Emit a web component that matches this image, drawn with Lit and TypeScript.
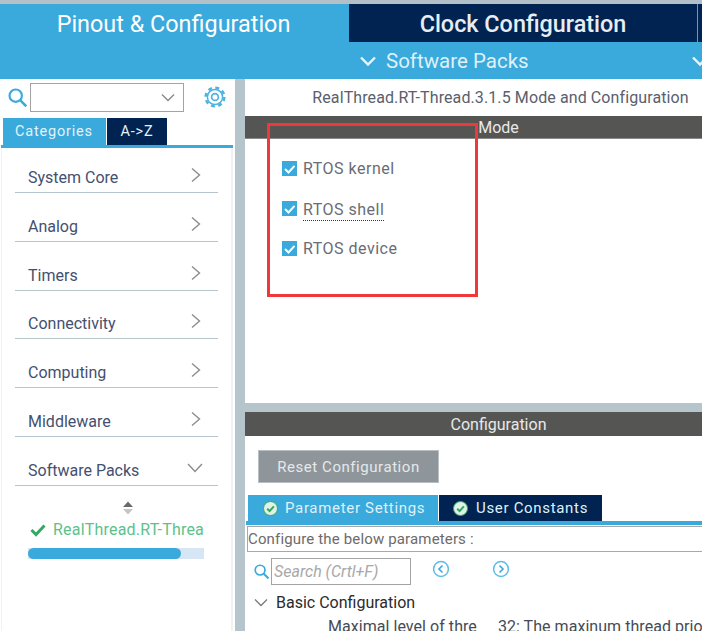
import { LitElement, html, css, svg } from "lit";
import { customElement } from "lit/decorators.js";

const chev = (d: string) => html`<svg class="chev" width="16" height="16" viewBox="0 0 16 16"><path d="${d}" fill="none" stroke="#8c8c8c" stroke-width="1.4"/></svg>`;
const RIGHT = "M5 1.5 L12.5 8 L5 14.5";
const DOWN = "M1 4 L8 11.5 L15 4";
const search = (s: number) => html`<svg width="${s}" height="${s}" viewBox="0 0 16 16"><circle cx="6.5" cy="6.5" r="5.2" fill="none" stroke="#3aa9dc" stroke-width="1.8"/><path d="M10.2 10.2 L15.4 15.4" stroke="#3aa9dc" stroke-width="2.2"/></svg>`;
const okBadge = html`<svg width="15" height="15" viewBox="0 0 15 15"><circle cx="7.5" cy="7.5" r="7" fill="#dff3e6" stroke="#35a864" stroke-width="1"/><path d="M4.2 7.7 L6.6 10 L10.9 5.4" fill="none" stroke="#35a864" stroke-width="2"/></svg>`;
const circ = (d: string) => html`<svg width="18" height="18" viewBox="0 0 18 18"><circle cx="9" cy="9" r="7.4" fill="none" stroke="#5cbde6" stroke-width="1.5"/><path d="${d}" fill="none" stroke="#3aa9dc" stroke-width="1.6"/></svg>`;
const check = svg`<path d="M3 8 L6.5 11.5 L12.5 4.8" fill="none" stroke="#fff" stroke-width="2"/>`;

@customElement("app-root")
export class AppRoot extends LitElement {
  static styles = css`
    :host { display: block; width: 702px; height: 631px; overflow: hidden; position: relative; background: #fff;
      font-family: Roboto, "Liberation Sans", sans-serif; color: #555; }
    .top { background: #3aa9dc; border-top: 4px solid #b3c0c8; height: 75px; display: flex; flex-direction: column; }
    .tabs { display: flex; height: 38px; }
    .tab { font-size: 23.4px; color: #fff; display: flex; justify-content: center; align-items: center; font-weight: 400; padding-top: 2px; box-sizing: border-box; }
    .t1 { width: 349px; padding-right: 2px; }
    .t2 { width: 348px; background: #002352; color: #e8edf2; font-weight: 500; }
    .t3 { flex: 1; margin-left: 1px; background: #002352; }
    .packs { height: 37px; position: relative; display: flex; align-items: center; color: #dff1fa; font-size: 20.5px; padding-left: 359px; gap: 9px; }
    .packs .end { margin-left: auto; margin-right: -7px; }
    .body { display: flex; height: 552px; }
    .side { width: 235px; flex: none; padding-left: 1px; box-sizing: border-box; }
    .sr { display: flex; align-items: center; height: 34px; padding-left: 7px; margin-top: 1px; }
    .combo { width: 154px; height: 29px; box-sizing: border-box; border: 1px solid #a3a3a3; margin-left: 3px; display: flex; align-items: center; justify-content: flex-end; padding-right: 8px; }
    .gear { margin-left: 20px; }
    .ctabs { display: flex; height: 27px; margin-top: 4px; padding-left: 2px; gap: 1px; }
    .ctab { display: flex; align-items: center; justify-content: center; font-size: 14.5px; letter-spacing: 0.8px; color: #e4f2fa; box-sizing: border-box; }
    .c1 { width: 103px; background: #3aa9dc; padding-right: 1px; }
    .c2 { width: 60px; background: #002352; }
    .cline { height: 3px; background: #3aa9dc; width: 232px; }
    .cats { border-left: 1px solid #f0f2f3; border-right: 2px solid #f0f2f3; padding-left: 13px; height: 483px; width: 232px; box-sizing: border-box; }
    .cat { height: 48.8px; width: 203px; box-sizing: border-box; border-bottom: 1px solid #b6c4cc; display: flex; align-items: flex-end; justify-content: space-between; padding: 0 15px 5px 13px; font-size: 16px; color: #445070; }
    .cat:first-child { height: 45px; }
    .cat .chev { margin-bottom: 4px; }
    .sorter { display: flex; justify-content: center; height: 14px; margin-top: 15px; width: 226px; }
    .pack { font-size: 16px; letter-spacing: 0.2px; color: #5cc28c; display: flex; align-items: center; gap: 7px; height: 28px; padding-left: 15px; white-space: nowrap; width: 189px; overflow: hidden; box-sizing: border-box; margin-top: 1px; }
    .bar { width: 176px; height: 11px; margin: 4px 0 0 13px; background: #d6e6f5; }
    .bar div { width: 153px; height: 100%; background: #3aa9dc; border-radius: 6px; }
    .split { width: 10px; flex: none; background: #b6c4cc; }
    .main { width: 507px; flex: none; }
    .title { height: 37px; display: flex; justify-content: center; align-items: center; font-size: 16px; letter-spacing: 0.1px; color: #59606e; box-sizing: border-box; padding: 0 0 1px 4px; }
    .hd { background: #555654; color: #e9e9e9; font-size: 16px; display: flex; justify-content: center; align-items: center; height: 23px; border-bottom: 1px solid #8a8a8a; box-sizing: border-box; }
    .mode { height: 264px; padding: 19px 0 0 37px; box-sizing: border-box; display: flex; flex-direction: column; gap: 20px; }
    .opt { display: flex; align-items: center; gap: 6px; height: 20px; font-size: 16px; color: #696d75; letter-spacing: 0.5px; }
    .opt svg { flex: none; }
    .opt span { padding-top: 1px; }
    .dotted { border-bottom: 1px dotted #333; line-height: 20px; margin-bottom: -3px; }
    .hsplit { height: 9px; background: #b6c4cc; }
    .conf .hd { height: 24px; border: 0; }
    .reset { margin: 14px 0 0 13px; width: 181px; height: 33px; background: #8e969b; color: #e6e8e9; font-size: 15px; letter-spacing: 0.55px; display: flex; align-items: center; justify-content: center; border: 1px solid #b8bec2; box-sizing: border-box; }
    .ptabs { display: flex; gap: 1px; margin: 12px 0 0 3px; height: 26px; }
    .ptab { display: flex; align-items: center; font-size: 15px; letter-spacing: 0.68px; color: #dff1fa; box-sizing: border-box; }
    .p1 { width: 190px; background: #3aa9dc; padding-left: 15px; gap: 7px; }
    .p2 { width: 163px; background: #002352; padding-left: 14px; gap: 8px; }
    .pline { height: 4px; background: #3aa9dc; margin-left: 1px; }
    .cfgrow { height: 26px; margin: 1px 0 0 2px; border: 1px solid #a8a8a8; border-right: 0; box-sizing: border-box; display: flex; align-items: center; font-size: 15px; letter-spacing: 0.15px; color: #6e6a6a; }
    .srow { display: flex; align-items: center; height: 28px; margin-top: 5px; padding-left: 9px; }
    .sbox { width: 140px; height: 27px; box-sizing: border-box; border: 1px solid #a3a3a3; margin-left: 2px; font-style: italic; font-size: 16px; color: #a8a8a8; display: flex; align-items: center; padding-left: 2px; white-space: nowrap; }
    .nav1 { margin-left: 21px; }
    .nav2 { margin-left: 42px; }
    .basic { display: flex; align-items: center; gap: 8px; padding-left: 9px; margin-top: 7px; height: 20px; font-size: 16px; color: #2b2b2b; }
    .maxi { display: flex; padding-left: 83px; font-size: 16px; color: #454b55; margin-top: 5px; white-space: nowrap; height: 20px; letter-spacing: 0.05px; }
    .maxi span:last-child { margin-left: 21px; }
    .red { position: absolute; left: 267px; top: 123px; width: 211px; height: 174px; box-sizing: border-box; border: 3px solid #f0383a; }
  `;

  render() {
    const cats = ["System Core", "Analog", "Timers", "Connectivity", "Computing", "Middleware"];
    const opts = ["RTOS kernel", "RTOS shell", "RTOS device"];
    return html`
      <div class="top">
        <div class="tabs">
          <div class="tab t1">Pinout &amp; Configuration</div>
          <div class="tab t2">Clock Configuration</div>
          <div class="t3"></div>
        </div>
        <div class="packs">
          <svg width="18" height="12" viewBox="0 0 18 12"><path d="M2 2.5 L9 9.5 L16 2.5" fill="none" stroke="#e8f5fb" stroke-width="2.4"/></svg>
          <span>Software Packs</span>
          <svg class="end" width="18" height="12" viewBox="0 0 18 12"><path d="M2 2.5 L9 9.5 L16 2.5" fill="none" stroke="#e8f5fb" stroke-width="2.4"/></svg>
        </div>
      </div>
      <div class="body">
        <div class="side">
          <div class="sr">
            ${search(19)}
            <div class="combo"><svg width="14" height="9" viewBox="0 0 14 9"><path d="M1 1.5 L7 7.5 L13 1.5" fill="none" stroke="#8a8a8a" stroke-width="1.4"/></svg></div>
            <svg class="gear" width="22" height="22" viewBox="0 0 22 22">
              <circle cx="11" cy="11" r="9.4" fill="none" stroke="#4fb3e0" stroke-width="2.4" stroke-dasharray="4 3.38"/>
              <circle cx="11" cy="11" r="7.6" fill="none" stroke="#4fb3e0" stroke-width="1.5"/>
              <circle cx="11" cy="11" r="3.4" fill="none" stroke="#4fb3e0" stroke-width="1.7"/>
            </svg>
          </div>
          <div class="ctabs"><div class="ctab c1">Categories</div><div class="ctab c2">A-&gt;Z</div></div>
          <div class="cline"></div>
          <div class="cats">
            ${cats.map((c) => html`<div class="cat"><span>${c}</span>${chev(RIGHT)}</div>`)}
            <div class="cat"><span>Software Packs</span>${chev(DOWN)}</div>
            <div class="sorter"><svg width="12" height="14" viewBox="0 0 12 14"><path d="M6 0.5 L11 6 H1 Z" fill="#6a6a6a"/><path d="M6 13.5 L11 8 H1 Z" fill="#c4c4c4"/></svg></div>
            <div class="pack">
              <svg width="16" height="14" viewBox="0 0 16 14" style="flex:none"><path d="M1.5 7 L6 11.5 L14.5 2.5" fill="none" stroke="#35a864" stroke-width="3"/></svg>
              <span>RealThread.RT-Thread</span>
            </div>
            <div class="bar"><div></div></div>
          </div>
        </div>
        <div class="split"></div>
        <div class="main">
          <div class="title">RealThread.RT-Thread.3.1.5 Mode and Configuration</div>
          <div class="hd">Mode</div>
          <div class="mode">
            ${opts.map((o, i) => html`<div class="opt">
              <svg width="15" height="15" viewBox="0 0 15 15"><rect width="15" height="15" fill="#3aa9dc"/>${check}</svg>
              <span class="${i === 1 ? "dotted" : ""}">${o}</span></div>`)}
          </div>
          <div class="hsplit"></div>
          <div class="conf">
            <div class="hd">Configuration</div>
            <div class="reset">Reset Configuration</div>
            <div class="ptabs">
              <div class="ptab p1">${okBadge}<span>Parameter Settings</span></div>
              <div class="ptab p2">${okBadge}<span>User Constants</span></div>
            </div>
            <div class="pline"></div>
            <div class="cfgrow">Configure the below parameters :</div>
            <div class="srow">
              ${search(15)}
              <div class="sbox">Search (Crtl+F)</div>
              <span class="nav1">${circ("M10.5 5.5 L7 9 L10.5 12.5")}</span>
              <span class="nav2">${circ("M7.5 5.5 L11 9 L7.5 12.5")}</span>
            </div>
            <div class="basic"><svg width="14" height="9" viewBox="0 0 14 9"><path d="M1 1.5 L7 7.5 L13 1.5" fill="none" stroke="#7a7a7a" stroke-width="1.3"/></svg><span>Basic Configuration</span></div>
            <div class="maxi"><span>Maximal level of thre</span><span>32: The maxinum thread priority</span></div>
          </div>
        </div>
      </div>
      <div class="red"></div>
    `;
  }
}
